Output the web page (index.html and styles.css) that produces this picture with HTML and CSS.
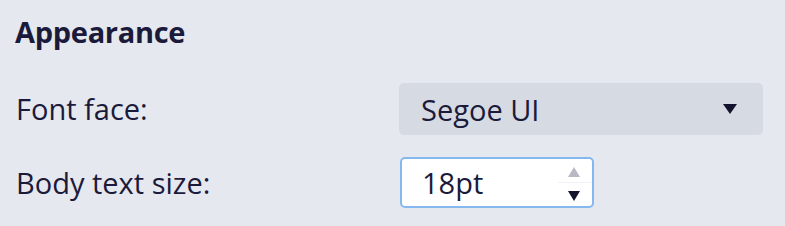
FILE: index.html
```html
<!DOCTYPE html>
<html lang="en">
<head>
  <meta charset="UTF-8" />
  <title>Appearance</title>
  <link rel="stylesheet" href="styles.css">
</head>
<body>
  <section class="settings">
    <h2 class="settings-title">Appearance</h2>

    <div class="settings-grid">
      <label class="field-label" for="fontFace">Font face:</label>
      <div class="select">
        <span class="select-value" id="fontFace">Segoe UI</span>
        <span class="select-arrow"></span>
      </div>

      <label class="field-label" for="bodySize">Body text size:</label>
      <div class="number">
        <span class="number-value" id="bodySize">18pt</span>
        <div class="spinner">
          <span class="spin up"></span>
          <span class="spin down"></span>
        </div>
      </div>
    </div>
  </section>
</body>
</html>
```

FILE: styles.css
```css
* {
  margin: 0;
  padding: 0;
  box-sizing: border-box;
}

body {
  background-color: #e5e8ee;
  color: #1b1a3b;
  font-family: "Open Sans", "Noto Sans", sans-serif;
  font-size: 29px;
  height: 100vh;
  overflow: hidden;
}

.settings {
  padding: 12px 16px 0 15px;
}

.settings-title {
  font-size: 29px;
  font-weight: 700;
  letter-spacing: -0.3px;
  line-height: 40px;
  height: 71px;
}

/* label column + control column */
.settings-grid {
  display: grid;
  grid-template-columns: 384px auto;
  grid-template-rows: 52px 51px;
  row-gap: 22px;
  align-items: center;
}

.field-label {
  padding-left: 1px;
  line-height: 40px;
}

/* FONT FACE DROPDOWN */
.select {
  width: 364px;
  height: 52px;
  background-color: #d6dae2;
  border-radius: 5px;
  display: flex;
  align-items: center;
  justify-content: space-between;
  padding: 0 26px 0 22px;
}

.select-arrow {
  width: 0;
  height: 0;
  border-left: 7px solid transparent;
  border-right: 7px solid transparent;
  border-top: 10px solid #14132e;
}

/* BODY SIZE NUMBER INPUT */
.number {
  width: 194px;
  height: 51px;
  margin-left: 1px;
  background-color: #fff;
  border: 2px solid #86b8f0;
  border-radius: 5px;
  display: flex;
  align-items: center;
  justify-content: space-between;
  padding: 0 0 0 20px;
}

.spinner {
  position: relative;
  width: 34px;
  height: 100%;
  display: flex;
  flex-direction: column;
  align-items: flex-start;
  justify-content: center;
  gap: 14px;
  padding-left: 10px;
  padding-top: 2px;
}

/* faint line between the two spin buttons */
.spinner::after {
  content: "";
  position: absolute;
  left: 0;
  right: 0;
  top: 23px;
  height: 1px;
  background-color: #f1f2f6;
}

.spin {
  width: 0;
  height: 0;
  border-left: 6.5px solid transparent;
  border-right: 6.5px solid transparent;
}

.spin.up {
  border-bottom: 10px solid #b9b9c6;
}

.spin.down {
  border-top: 10px solid #14132e;
}
```
